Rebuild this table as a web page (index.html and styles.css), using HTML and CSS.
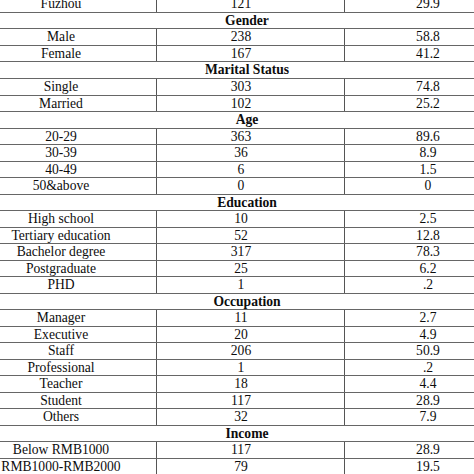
FILE: index.html
```html
<!DOCTYPE html>
<html>
<head>
<meta charset="utf-8">
<link rel="stylesheet" href="styles.css">
</head>
<body>
<div class="table">
  <div class="row"><div class="c1">Fuzhou</div><div class="c2">121</div><div class="c3">29.9</div></div>
  <div class="row head">Gender</div>
  <div class="row"><div class="c1">Male</div><div class="c2">238</div><div class="c3">58.8</div></div>
  <div class="row"><div class="c1">Female</div><div class="c2">167</div><div class="c3">41.2</div></div>
  <div class="row head">Marital Status</div>
  <div class="row"><div class="c1">Single</div><div class="c2">303</div><div class="c3">74.8</div></div>
  <div class="row"><div class="c1">Married</div><div class="c2">102</div><div class="c3">25.2</div></div>
  <div class="row head">Age</div>
  <div class="row"><div class="c1">20-29</div><div class="c2">363</div><div class="c3">89.6</div></div>
  <div class="row"><div class="c1">30-39</div><div class="c2">36</div><div class="c3">8.9</div></div>
  <div class="row"><div class="c1">40-49</div><div class="c2">6</div><div class="c3">1.5</div></div>
  <div class="row"><div class="c1">50&amp;above</div><div class="c2">0</div><div class="c3">0</div></div>
  <div class="row head">Education</div>
  <div class="row"><div class="c1">High school</div><div class="c2">10</div><div class="c3">2.5</div></div>
  <div class="row"><div class="c1">Tertiary education</div><div class="c2">52</div><div class="c3">12.8</div></div>
  <div class="row"><div class="c1">Bachelor degree</div><div class="c2">317</div><div class="c3">78.3</div></div>
  <div class="row"><div class="c1">Postgraduate</div><div class="c2">25</div><div class="c3">6.2</div></div>
  <div class="row"><div class="c1">PHD</div><div class="c2">1</div><div class="c3">.2</div></div>
  <div class="row head">Occupation</div>
  <div class="row"><div class="c1">Manager</div><div class="c2">11</div><div class="c3">2.7</div></div>
  <div class="row"><div class="c1">Executive</div><div class="c2">20</div><div class="c3">4.9</div></div>
  <div class="row"><div class="c1">Staff</div><div class="c2">206</div><div class="c3">50.9</div></div>
  <div class="row"><div class="c1">Professional</div><div class="c2">1</div><div class="c3">.2</div></div>
  <div class="row"><div class="c1">Teacher</div><div class="c2">18</div><div class="c3">4.4</div></div>
  <div class="row"><div class="c1">Student</div><div class="c2">117</div><div class="c3">28.9</div></div>
  <div class="row"><div class="c1">Others</div><div class="c2">32</div><div class="c3">7.9</div></div>
  <div class="row head">Income</div>
  <div class="row"><div class="c1">Below RMB1000</div><div class="c2">117</div><div class="c3">28.9</div></div>
  <div class="row"><div class="c1">RMB1000-RMB2000</div><div class="c2">79</div><div class="c3">19.5</div></div>
</div>
</body>
</html>
```

FILE: styles.css
```css
html, body {
  margin: 0;
  padding: 0;
  background: #ffffff;
  overflow: hidden;
}
body {
  width: 474px;
  height: 474px;
}
.table {
  margin-top: -3.6px;
  margin-left: -34px;
  width: 545px;
  font-family: "Liberation Serif", "Times New Roman", serif;
  font-size: 13.6px;
  color: #0d0d0d;
}
.row {
  box-sizing: border-box;
  height: 16.52px;
  border-bottom: 1px solid #666666;
  display: grid;
  grid-template-columns: 191px 188px 166px;
  line-height: 15px;
  white-space: nowrap;
}
.row > div {
  box-sizing: border-box;
  text-align: center;
}
.c1, .c2 {
  border-right: 1px solid #555555;
}
.c2 {
  padding-right: 19px;
}
.head {
  display: block;
  font-weight: bold;
  text-align: center;
  padding-left: 17px;
}
```
